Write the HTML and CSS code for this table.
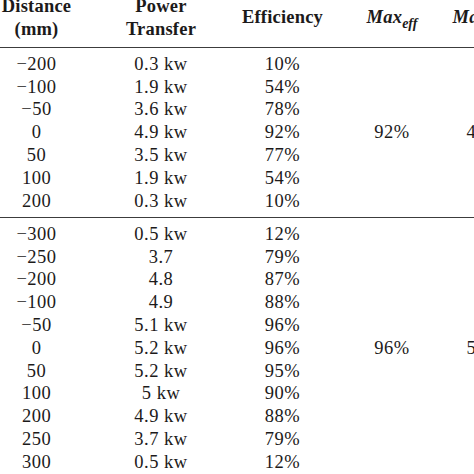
FILE: index.html
```html
<!DOCTYPE html>
<html>
<head>
<meta charset="utf-8">
<link rel="stylesheet" href="styles.css">
</head>
<body>
<table class="data">
  <colgroup>
    <col class="c1"><col class="c2"><col class="c3"><col class="c4"><col class="c5">
  </colgroup>
  <thead>
    <tr>
      <th>Distance<br>(mm)</th>
      <th>Power<br>Transfer</th>
      <th>Efficiency</th>
      <th class="it">Max<sub>eff</sub></th>
      <th class="it left">Max<sub>P</sub></th>
    </tr>
  </thead>
  <tbody>
    <tr class="first"><td>−200</td><td>0.3 kw</td><td>10%</td><td rowspan="7" class="span">92%</td><td rowspan="7" class="span left">4.9 kw</td></tr>
    <tr><td>−100</td><td>1.9 kw</td><td>54%</td></tr>
    <tr><td>−50</td><td>3.6 kw</td><td>78%</td></tr>
    <tr><td>0</td><td>4.9 kw</td><td>92%</td></tr>
    <tr><td>50</td><td>3.5 kw</td><td>77%</td></tr>
    <tr><td>100</td><td>1.9 kw</td><td>54%</td></tr>
    <tr class="last"><td>200</td><td>0.3 kw</td><td>10%</td></tr>
  </tbody>
  <tbody>
    <tr class="first"><td>−300</td><td>0.5 kw</td><td>12%</td><td rowspan="11" class="span">96%</td><td rowspan="11" class="span left">5.2 kw</td></tr>
    <tr><td>−250</td><td>3.7</td><td>79%</td></tr>
    <tr><td>−200</td><td>4.8</td><td>87%</td></tr>
    <tr><td>−100</td><td>4.9</td><td>88%</td></tr>
    <tr><td>−50</td><td>5.1 kw</td><td>96%</td></tr>
    <tr><td>0</td><td>5.2 kw</td><td>96%</td></tr>
    <tr><td>50</td><td>5.2 kw</td><td>95%</td></tr>
    <tr><td>100</td><td>5 kw</td><td>90%</td></tr>
    <tr><td>200</td><td>4.9 kw</td><td>88%</td></tr>
    <tr><td>250</td><td>3.7 kw</td><td>79%</td></tr>
    <tr class="last"><td>300</td><td>0.5 kw</td><td>12%</td></tr>
  </tbody>
</table>
</body>
</html>
```
FILE: styles.css
```css
html, body {
  margin: 0;
  padding: 0;
  background: #ffffff;
  overflow: hidden;
}
body {
  width: 474px;
  height: 474px;
  font-family: "Liberation Serif", "Times New Roman", serif;
  font-size: 18.5px;
  color: #1c1a1a;
}
.data {
  border-collapse: collapse;
  table-layout: fixed;
  width: 569px;
  margin-left: -23.5px;
  margin-top: -4.9px;
}
.c1 { width: 120px; }
.c2 { width: 129px; }
.c3 { width: 114px; }
.c4 { width: 105px; }
.c5 { width: 101px; }
.data th {
  font-weight: bold;
  line-height: 22.7px;
  padding: 0 0 6.8px;
  text-align: center;
  vertical-align: middle;
  letter-spacing: 0.2px;
}
.data th.it {
  font-style: italic;
}
.data sub {
  font-size: 14px;
  line-height: 0;
  vertical-align: -5px;
  letter-spacing: 0;
}
.data .left {
  text-align: left;
  padding-left: 8px;
}
.data tbody {
  border-top: 1.3px solid #3c3c3c;
}
.data td {
  padding: 0;
  line-height: 22.8px;
  text-align: center;
  vertical-align: middle;
  white-space: nowrap;
  letter-spacing: 0.5px;
}
.data tr.first td {
  padding-top: 4.5px;
}
.data tr.last td {
  padding-bottom: 5px;
}
.data td.span {
  padding-top: 4.5px;
  padding-bottom: 5px;
}
.data td.span.left {
  padding-left: 22px;
}
```
